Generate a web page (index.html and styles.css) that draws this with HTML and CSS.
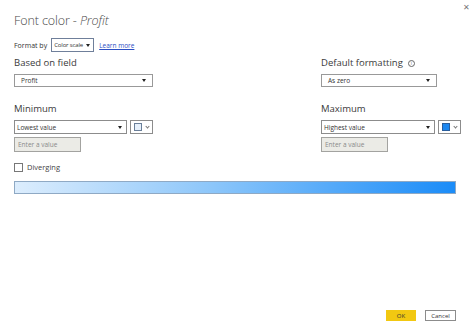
FILE: index.html
```html
<!DOCTYPE html>
<html>
<head>
<meta charset="utf-8">
<link rel="stylesheet" href="styles.css">
</head>
<body>
<div class="dialog">
  <div class="header">
    <h1 class="title">Font color - <em>Profit</em></h1>
    <span class="close">&#x2715;</span>
  </div>
  <div class="format-row">
    <span class="small-label">Format by</span>
    <div class="select select-format"><span>Color scale</span><i class="caret"></i></div>
    <a class="link">Learn more</a>
  </div>
  <div class="cols">
    <div class="col">
      <div class="label">Based on field</div>
      <div class="select select-full"><span>Profit</span><i class="caret"></i></div>
      <div class="label label-gap">Minimum</div>
      <div class="pick-row">
        <div class="select select-value"><span>Lowest value</span><i class="caret"></i></div>
        <div class="color-btn"><span class="swatch swatch-light"></span><i class="chev"></i></div>
      </div>
      <div class="input">Enter a value</div>
    </div>
    <div class="col">
      <div class="label">Default formatting <span class="info">i</span></div>
      <div class="select select-full select-right"><span>As zero</span><i class="caret"></i></div>
      <div class="label label-gap">Maximum</div>
      <div class="pick-row">
        <div class="select select-value"><span>Highest value</span><i class="caret"></i></div>
        <div class="color-btn"><span class="swatch swatch-blue"></span><i class="chev"></i></div>
      </div>
      <div class="input">Enter a value</div>
    </div>
  </div>
  <div class="check-row">
    <span class="checkbox"></span>
    <span class="check-label">Diverging</span>
  </div>
  <div class="gradient"></div>
  <div class="footer">
    <button class="btn btn-ok">OK</button>
    <button class="btn btn-cancel">Cancel</button>
  </div>
</div>
</body>
</html>
```
FILE: styles.css
```css
html, body {
  margin: 0;
  padding: 0;
  background: #ffffff;
}
body {
  font-family: "Open Sans", "Noto Sans", "Liberation Sans", sans-serif;
  color: #333333;
}
.dialog {
  width: 474px;
  height: 334px;
  box-sizing: border-box;
  padding: 12px 18px 13px 14px;
  display: flex;
  flex-direction: column;
}
.header {
  display: flex;
  justify-content: space-between;
  align-items: flex-start;
}
.title {
  margin: 0;
  font-size: 12.5px;
  line-height: 18px;
  font-weight: 300;
  color: #4a4a4a;
  letter-spacing: -0.1px;
}
.title em {
  font-style: italic;
}
.close {
  font-size: 8px;
  line-height: 8px;
  color: #777777;
  margin-top: -9px;
  margin-right: -14px;
}
.format-row {
  display: flex;
  align-items: center;
  margin-top: 8px;
  height: 14px;
}
.small-label {
  font-size: 7px;
  color: #333333;
  margin-right: 4px;
  white-space: nowrap;
}
.select {
  box-sizing: border-box;
  border: 1px solid #8c8c8c;
  background: #ffffff;
  display: flex;
  align-items: center;
  justify-content: space-between;
  font-size: 6.5px;
  color: #333333;
  white-space: nowrap;
}
.select-format {
  width: 43px;
  height: 14px;
  padding: 0 3px 0 2px;
  border-color: #6f7f9a;
  font-size: 6px;
  letter-spacing: -0.15px;
}
.link {
  font-size: 6.5px;
  color: #2b4fc4;
  text-decoration: underline;
  margin-left: 5px;
  white-space: nowrap;
}
.caret {
  flex: none;
  width: 0;
  height: 0;
  border-left: 2px solid transparent;
  border-right: 2px solid transparent;
  border-top: 3px solid #222222;
}
.cols {
  display: grid;
  grid-template-columns: 139px 140px;
  column-gap: 168px;
  margin-top: 5px;
}
.col {
  display: flex;
  flex-direction: column;
}
.label {
  font-size: 9.5px;
  line-height: 12px;
  color: #3a3a3a;
  display: flex;
  align-items: center;
}
.label-gap {
  margin-top: 16px;
}
.info {
  display: inline-flex;
  align-items: center;
  justify-content: center;
  box-sizing: border-box;
  width: 7px;
  height: 7px;
  border: 0.8px solid #666666;
  border-radius: 50%;
  font-size: 4.5px;
  line-height: 1;
  margin-left: 5px;
  color: #666666;
}
.select-full {
  margin-top: 5px;
  width: 139px;
  height: 13px;
  padding: 0 6px 0 6px;
  border-color: #999999;
}
.select-right {
  width: 116px;
}
.pick-row {
  display: flex;
  align-items: center;
  gap: 3px;
  margin-top: 5px;
}
.select-value {
  width: 114px;
  height: 14px;
  padding: 0 4px 0 2px;
  border-color: #8c8c8c;
}
.color-btn {
  box-sizing: border-box;
  width: 23px;
  height: 14px;
  border: 1px solid #8c8c8c;
  display: flex;
  align-items: center;
  padding-left: 3px;
  gap: 4px;
}
.swatch {
  box-sizing: border-box;
  width: 8px;
  height: 8px;
  border: 1px solid #6a7f99;
}
.swatch-light {
  background: #e6f0fb;
}
.swatch-blue {
  background: #1e88f0;
  border-color: #2a5f9e;
}
.chev {
  width: 2px;
  height: 2px;
  border-right: 0.8px solid #777777;
  border-bottom: 0.8px solid #777777;
  transform: rotate(45deg);
  margin-top: -1px;
}
.input {
  box-sizing: border-box;
  margin-top: 3px;
  width: 67px;
  height: 15px;
  background: #ebebe6;
  border: 1px solid #a3a3a0;
  font-size: 6.5px;
  color: #8a8a8a;
  display: flex;
  align-items: center;
  padding-left: 3px;
}
.check-row {
  display: flex;
  align-items: center;
  margin-top: 10px;
  height: 10px;
}
.checkbox {
  box-sizing: border-box;
  width: 9px;
  height: 9px;
  border: 1px solid #777777;
  background: #ffffff;
}
.check-label {
  font-size: 7.5px;
  color: #444444;
  margin-left: 4px;
}
.gradient {
  margin-top: 9px;
  height: 13px;
  box-sizing: border-box;
  border: 1px solid #8fa9c4;
  background: linear-gradient(to right, #dcedfd 0%, #8cc6fa 45%, #1b8cf8 100%);
}
.footer {
  margin-top: auto;
  display: flex;
  justify-content: flex-end;
  gap: 9px;
}
.btn {
  box-sizing: border-box;
  height: 11px;
  padding: 0;
  font-family: inherit;
  font-size: 6px;
  line-height: 1;
  border: 1px solid #8c8c8c;
  background: #ffffff;
  color: #333333;
}
.btn-ok {
  width: 30px;
  background: #f2c811;
  border-color: #f2c811;
}
.btn-cancel {
  width: 31px;
}
```
